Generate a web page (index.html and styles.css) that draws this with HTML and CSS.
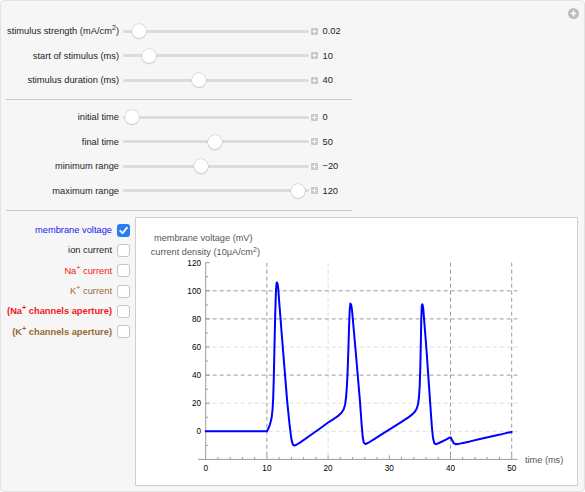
FILE: index.html
```html
<!DOCTYPE html>
<html>
<head>
<meta charset="utf-8">
<link rel="stylesheet" href="styles.css">
</head>
<body>
<div class="panel">
  <span class="corner-btn"><svg width="11" height="11" viewBox="0 0 11 11"><circle cx="5.5" cy="5.5" r="5.5" fill="#bdbdbd"/><path d="M5.5 2.8v5.4M2.8 5.5h5.4" stroke="#fff" stroke-width="1.6"/></svg></span>

  <div class="group">
    <div class="row"><span class="lbl">stimulus strength (mA/cm<sup>2</sup>)</span><div class="track"><span class="thumb" style="left:8.7%"></span></div><svg class="plus" viewBox="0 0 7 7"><rect width="7" height="7" rx="1" fill="#c9c9c9"/><path d="M3.5 1.5v4M1.5 3.5h4" stroke="#fff" stroke-width="1"/></svg><span class="val">0.02</span></div>
    <div class="row"><span class="lbl">start of stimulus (ms)</span><div class="track"><span class="thumb" style="left:14.1%"></span></div><svg class="plus" viewBox="0 0 7 7"><rect width="7" height="7" rx="1" fill="#c9c9c9"/><path d="M3.5 1.5v4M1.5 3.5h4" stroke="#fff" stroke-width="1"/></svg><span class="val">10</span></div>
    <div class="row"><span class="lbl">stimulus duration (ms)</span><div class="track"><span class="thumb" style="left:41.3%"></span></div><svg class="plus" viewBox="0 0 7 7"><rect width="7" height="7" rx="1" fill="#c9c9c9"/><path d="M3.5 1.5v4M1.5 3.5h4" stroke="#fff" stroke-width="1"/></svg><span class="val">40</span></div>
  </div>

  <div class="sep sep-1"></div>

  <div class="group">
    <div class="row"><span class="lbl">initial time</span><div class="track"><span class="thumb" style="left:5.1%"></span></div><svg class="plus" viewBox="0 0 7 7"><rect width="7" height="7" rx="1" fill="#c9c9c9"/><path d="M3.5 1.5v4M1.5 3.5h4" stroke="#fff" stroke-width="1"/></svg><span class="val">0</span></div>
    <div class="row"><span class="lbl">final time</span><div class="track"><span class="thumb" style="left:49.7%"></span></div><svg class="plus" viewBox="0 0 7 7"><rect width="7" height="7" rx="1" fill="#c9c9c9"/><path d="M3.5 1.5v4M1.5 3.5h4" stroke="#fff" stroke-width="1"/></svg><span class="val">50</span></div>
    <div class="row"><span class="lbl">minimum range</span><div class="track"><span class="thumb" style="left:42.2%"></span></div><svg class="plus" viewBox="0 0 7 7"><rect width="7" height="7" rx="1" fill="#c9c9c9"/><path d="M3.5 1.5v4M1.5 3.5h4" stroke="#fff" stroke-width="1"/></svg><span class="val">&minus;20</span></div>
    <div class="row"><span class="lbl">maximum range</span><div class="track"><span class="thumb" style="left:94.2%"></span></div><svg class="plus" viewBox="0 0 7 7"><rect width="7" height="7" rx="1" fill="#c9c9c9"/><path d="M3.5 1.5v4M1.5 3.5h4" stroke="#fff" stroke-width="1"/></svg><span class="val">120</span></div>
  </div>

  <div class="sep sep-2"></div>

  <div class="bottom">
    <div class="checks">
      <div class="check"><span class="clbl c-blue">membrane voltage</span><span class="box on"><svg width="13" height="13" viewBox="0 0 13 13"><path d="M3.2 6.8 L5.6 9.2 L10 3.6" fill="none" stroke="#fff" stroke-width="1.8" stroke-linecap="round" stroke-linejoin="round"/></svg></span></div>
      <div class="check"><span class="clbl">ion current</span><span class="box"></span></div>
      <div class="check"><span class="clbl c-red">Na<sup>+</sup> current</span><span class="box"></span></div>
      <div class="check"><span class="clbl c-brown">K<sup>+</sup> current</span><span class="box"></span></div>
      <div class="check"><span class="clbl c-red bold">(Na<sup>+</sup> channels aperture)</span><span class="box"></span></div>
      <div class="check"><span class="clbl c-brown bold">(K<sup>+</sup> channels aperture)</span><span class="box"></span></div>
    </div>

    <div class="plot">
      <svg class="chart" width="441" height="267" viewBox="136 218 441 267">
        <text class="axlbl" x="154" y="241">membrane voltage (mV)</text>
        <text class="axlbl" x="150.7" y="255">current density (10μA/cm<tspan class="sup" dy="-3.5">2</tspan><tspan dy="3.5">)</tspan></text>

        <g class="grid-light">
          <line x1="205.7" y1="347.0" x2="517.5" y2="347.0"/>
          <line x1="205.7" y1="403.2" x2="517.5" y2="403.2"/>
          <line x1="205.7" y1="431.3" x2="517.5" y2="431.3"/>
          <line x1="328.1" y1="262.7" x2="328.1" y2="459.4"/>
        </g>
        <g class="grid-dark">
          <line x1="205.7" y1="290.8" x2="517.5" y2="290.8"/>
          <line x1="205.7" y1="318.9" x2="517.5" y2="318.9"/>
          <line x1="205.7" y1="375.1" x2="517.5" y2="375.1"/>
          <line x1="266.9" y1="262.7" x2="266.9" y2="459.4"/>
          <line x1="450.5" y1="262.7" x2="450.5" y2="459.4"/>
          <line x1="511.7" y1="262.7" x2="511.7" y2="459.4"/>
        </g>

        <g class="axis">
          <line x1="205.7" y1="262.2" x2="205.7" y2="459.4"/>
          <line x1="198" y1="459.4" x2="517.5" y2="459.4"/>
          <path d="M205.7 262.7h4M205.7 290.8h4M205.7 318.9h4M205.7 347h4M205.7 375.1h4M205.7 403.2h4M205.7 431.3h4
                   M205.7 276.7h2.5M205.7 304.9h2.5M205.7 333h2.5M205.7 361.1h2.5M205.7 389.2h2.5M205.7 417.3h2.5M205.7 445.4h2.5"/>
          <path d="M266.9 459.4v-4M328.1 459.4v-4M389.3 459.4v-4M450.5 459.4v-4M511.7 459.4v-4
                   M217.9 459.4v-2.5M230.2 459.4v-2.5M242.4 459.4v-2.5M254.7 459.4v-2.5
                   M279.1 459.4v-2.5M291.4 459.4v-2.5M303.6 459.4v-2.5M315.9 459.4v-2.5
                   M340.3 459.4v-2.5M352.6 459.4v-2.5M364.8 459.4v-2.5M377.1 459.4v-2.5
                   M401.5 459.4v-2.5M413.8 459.4v-2.5M426 459.4v-2.5M438.3 459.4v-2.5
                   M462.7 459.4v-2.5M475 459.4v-2.5M487.2 459.4v-2.5M499.5 459.4v-2.5"/>
        </g>

        <g class="ticklbl">
          <text x="201" y="265.7" text-anchor="end">120</text>
          <text x="201" y="293.8" text-anchor="end">100</text>
          <text x="201" y="321.9" text-anchor="end">80</text>
          <text x="201" y="350" text-anchor="end">60</text>
          <text x="201" y="378.1" text-anchor="end">40</text>
          <text x="201" y="406.2" text-anchor="end">20</text>
          <text x="201" y="434.3" text-anchor="end">0</text>
          <text x="205.7" y="471" text-anchor="middle">0</text>
          <text x="266.9" y="471" text-anchor="middle">10</text>
          <text x="328.1" y="471" text-anchor="middle">20</text>
          <text x="389.3" y="471" text-anchor="middle">30</text>
          <text x="450.5" y="471" text-anchor="middle">40</text>
          <text x="511.7" y="471" text-anchor="middle">50</text>
        </g>
        <text class="axlbl" x="525" y="463">time (ms)</text>

        <polyline class="curve" points="205.7,431.3 266.9,431.3 268.4,428.5 270.0,424.3 271.6,418.0 272.6,409.0 273.2,398.0 273.8,378.0 274.4,350.0 275.2,315.0 276.0,290.0 276.7,282.4 277.5,283.5 278.3,289.0 279.1,300.6 283.0,350.0 287.1,400.4 289.6,425.0 291.3,438.5 292.6,444.0 294.0,445.6 296.0,445.0 300.0,442.6 309.7,435.8 320.0,428.5 328.1,422.5 334.0,418.8 338.5,415.6 341.5,412.8 343.6,409.5 345.0,405.0 346.0,398.0 346.8,388.0 347.6,372.0 348.3,352.0 349.0,328.0 349.7,310.0 350.4,303.4 351.2,305.0 352.0,310.0 356.0,355.0 359.9,400.4 361.6,424.0 362.7,437.0 363.8,442.8 365.4,444.0 368.0,443.0 375.0,438.6 383.2,433.4 392.0,427.8 401.5,421.8 408.0,417.6 412.0,414.6 414.8,411.8 416.8,408.5 418.1,404.0 419.0,397.0 419.7,386.0 420.3,368.0 420.8,345.0 421.3,318.0 421.8,305.5 422.4,304.3 423.2,308.0 426.5,350.0 430.0,400.4 431.8,426.0 433.0,438.0 434.4,443.4 436.4,444.2 440.0,442.5 446.0,439.6 449.9,437.4 451.0,437.8 452.3,440.6 453.6,443.0 455.4,444.2 458.0,444.1 463.0,442.9 470.0,441.4 480.0,439.0 490.0,436.8 500.0,434.6 506.0,433.1 511.7,432.0"/>
      </svg>
    </div>
  </div>
</div>
</body>
</html>
```

FILE: styles.css
```css
html, body {
  margin: 0;
  padding: 0;
  background: #ffffff;
}

.panel {
  position: relative;
  width: 585px;
  height: 492px;
  box-sizing: border-box;
  border: 1px solid #e3e3e3;
  border-radius: 4px;
  background: #f6f6f6;
  padding-top: 18px;
  font-family: "Liberation Sans", Arial, sans-serif;
  font-size: 9.3px;
  color: #1e1e1e;
}

.corner-btn {
  position: absolute;
  top: 7px;
  right: 5px;
  width: 11px;
  height: 11px;
  line-height: 0;
}

.group {
  display: flex;
  flex-direction: column;
}

.row {
  display: flex;
  align-items: center;
  height: 24.5px;
}

.lbl {
  width: 118px;
  text-align: right;
  white-space: nowrap;
}

sup {
  font-size: 7.2px;
  line-height: 0;
  vertical-align: 4px;
}

.track {
  position: relative;
  width: 186px;
  height: 3px;
  margin-left: 3.5px;
  border-radius: 2px;
  background: #dcdcdc;
}

.thumb {
  position: absolute;
  top: 50%;
  width: 14px;
  height: 14px;
  border-radius: 50%;
  background: #ffffff;
  box-shadow: 0 0 0 0.5px #c8c8c8, 0 1px 1.5px rgba(0, 0, 0, 0.18);
  transform: translate(-50%, -50%);
}

.plus {
  width: 7px;
  height: 7px;
  margin-left: 2px;
}

.val {
  margin-left: 5px;
  white-space: nowrap;
}

.sep {
  width: 346px;
  height: 1px;
  margin-left: 5px;
  background: #cacaca;
}

.sep-1 {
  margin-top: 6.5px;
  margin-bottom: 5px;
}

.sep-2 {
  margin-top: 7px;
  margin-bottom: 6px;
}

.bottom {
  display: flex;
  align-items: flex-start;
}

.checks {
  width: 134px;
  padding-top: 3px;
  display: flex;
  flex-direction: column;
}

.check {
  display: flex;
  align-items: center;
  justify-content: flex-end;
  height: 20.3px;
}

.clbl {
  white-space: nowrap;
}

.c-blue { color: #1717f0; }
.c-red { color: #f01818; }
.c-brown { color: #996633; }
.bold { font-weight: bold; }

.box {
  width: 13px;
  height: 13px;
  box-sizing: border-box;
  margin-left: 5px;
  margin-right: 5px;
  border: 1px solid #c6c6c6;
  border-radius: 3px;
  background: #ffffff;
  line-height: 0;
}

.box.on {
  border: none;
  background: #2a7bf4;
}

.plot {
  width: 443px;
  height: 269px;
  box-sizing: border-box;
  border: 1px solid #cfcfcf;
  background: #ffffff;
  line-height: 0;
}

.chart {
  display: block;
  font-family: "Liberation Sans", Arial, sans-serif;
}

.axlbl {
  font-size: 9.2px;
  fill: #555555;
}

.axlbl .sup {
  font-size: 7px;
}

.ticklbl {
  font-size: 8.2px;
  fill: #000000;
}

.grid-light line {
  stroke: #dedede;
  stroke-width: 1;
  stroke-dasharray: 4 3;
}

.grid-dark line {
  stroke: #9a9a9a;
  stroke-width: 1;
  stroke-dasharray: 4 3;
}

.axis line,
.axis path {
  stroke: #9c9c9c;
  stroke-width: 1;
  fill: none;
}

.curve {
  fill: none;
  stroke: #0000ff;
  stroke-width: 2;
  stroke-linejoin: round;
  stroke-linecap: round;
}
```
